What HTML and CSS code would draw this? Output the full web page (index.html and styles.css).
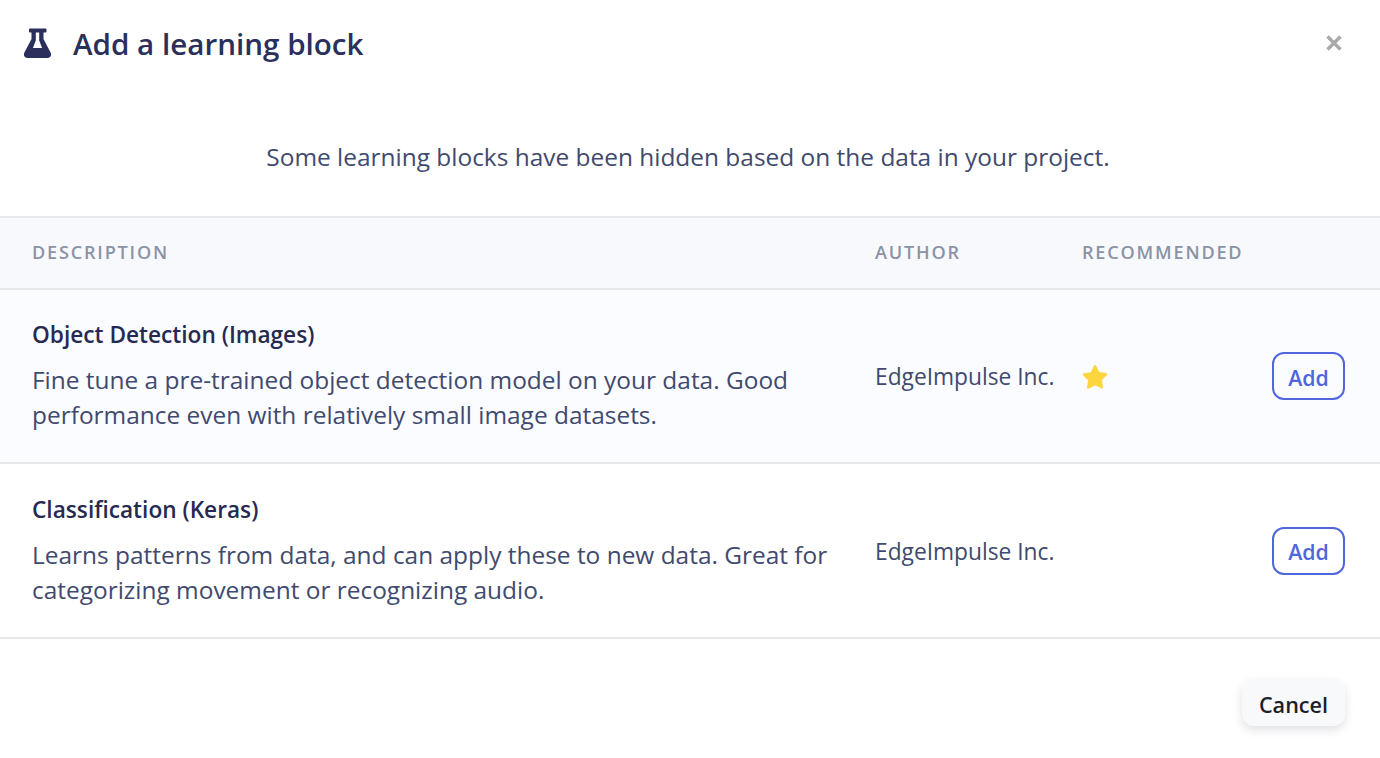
FILE: index.html
```html
<!DOCTYPE html>
<html lang="en">
<head>
<meta charset="utf-8">
<title>Add a learning block</title>
<link rel="stylesheet" href="styles.css">
</head>
<body>
<div class="modal">
  <header class="head">
    <svg class="flask" viewBox="0 0 28 32" width="28" height="32"><path d="M6 1.500h15.500a1 1 0 0 1 1 1v2a1 1 0 0 1-1 1h-2v6.500l7.200 13.700c1.300 2.600-.4 5.300-3.400 5.300H3.700c-3 0-4.700-2.700-3.400-5.300L7.500 12V5.500H6a1 1 0 0 1-1-1v-2a1 1 0 0 1 1-1zM11.800 5.500v8L8.900 21h9.200l-2.900-7.500v-8z" fill="#2a2f5b" fill-rule="evenodd"/></svg>
    <h1 class="title">Add a learning block</h1>
    <svg class="close" viewBox="0 0 16 16" width="16" height="16"><path d="M1.500 1.500l13 13M14.500 1.500l-13 13" stroke="#a9a9a9" stroke-width="3.400" fill="none"/></svg>
  </header>
  <p class="note">Some learning blocks have been hidden based on the data in your project.</p>
  <div class="table">
    <div class="row headrow">
      <div class="c-desc">DESCRIPTION</div>
      <div class="c-author">AUTHOR</div>
      <div class="c-rec">RECOMMENDED</div>
    </div>
    <div class="row item alt">
      <div class="c-desc">
        <div class="name">Object Detection (Images)</div>
        <div class="desc">Fine tune a pre-trained object detection model on your data. Good performance even with relatively small image datasets.</div>
      </div>
      <div class="c-author">EdgeImpulse Inc.</div>
      <div class="c-rec">
        <svg class="star" viewBox="0 0 24 24" width="26" height="26"><path d="M12 1.800c.5 0 .9.300 1.100.700l2.800 5.800 6.300.9c1 .1 1.400 1.400.7 2.100l-4.600 4.500 1.100 6.300c.2 1-.9 1.800-1.800 1.300L12 20.600l-5.600 3c-.9.500-2-.3-1.800-1.300l1.100-6.300-4.600-4.500c-.7-.7-.3-2 .7-2.100l6.300-.9 2.800-5.800c.2-.4.600-.7 1.100-.7z" fill="#fcd53f"/></svg>
      </div>
      <button class="add">Add</button>
    </div>
    <div class="row item last">
      <div class="c-desc">
        <div class="name">Classification (Keras)</div>
        <div class="desc">Learns patterns from data, and can apply these to new data. Great for categorizing movement or recognizing audio.</div>
      </div>
      <div class="c-author">EdgeImpulse Inc.</div>
      <div class="c-rec"></div>
      <button class="add">Add</button>
    </div>
  </div>
  <footer class="foot"><button class="cancel">Cancel</button></footer>
</div>
</body>
</html>
```
FILE: styles.css
```css
* { box-sizing: border-box; }
html, body { margin: 0; padding: 0; background: #fff; }
body { width: 1380px; height: 758px; overflow: hidden; font-family: "Open Sans", sans-serif; color: #414a6e; }
.head { display: flex; align-items: center; height: 88px; padding: 0 38px 0 24px; }
.flask { flex: none; margin-top: -3px; }
.title { margin: 0 0 0 21px; font-size: 29.600px; font-weight: 600; color: #2a2f5b; line-height: 38px; flex: 1; }
.close { flex: none; margin-top: -3px; }
.note { margin: 0; padding: 49px 4px 0 0; height: 128px; text-align: center; font-size: 24.450px; line-height: 40px; }
.table { border-top: 2px solid #e6e8ee; }
.row { display: flex; align-items: center; padding: 0 35px 0 32px; border-bottom: 2px solid #e6e8ee; }
.headrow { height: 72px; padding-bottom: 2px; background: #f8f9fc; font-size: 18.100px; font-weight: 600; letter-spacing: 1.800px; color: #8a93a6; }
.item { height: 174px; }
.last { height: 175px; }
.alt { background: #fbfcff; }
.c-desc { width: 843px; flex: none; padding-right: 10px; }
.c-author { width: 207px; flex: none; }
.item .c-author { font-size: 22.750px; padding-top: 1px; }
.c-rec { flex: 1; display: flex; align-items: center; }
.name { font-size: 22.660px; font-weight: 600; color: #262a52; line-height: 30px; margin-bottom: 12px; }
.desc { font-size: 24.450px; line-height: 35px; }
.star { display: block; }
.add { width: 73px; height: 48px; padding: 2px 0 0; border: 2px solid #4f66dc; border-radius: 12px; background: #fff; color: #4f66dc; font: 600 21.300px "Open Sans", sans-serif; }
.alt .add { background: #fbfcff; }
.foot { display: flex; justify-content: flex-end; padding: 40px 35px 0 0; }
.cancel { width: 103px; height: 47px; padding: 3px 0 0; border: 0; border-radius: 12px; background: #f8f9fb; color: #1c1f2a; font: 600 21.600px "Open Sans", sans-serif; box-shadow: 0 4px 10px rgba(40, 45, 80, .14); }
```
